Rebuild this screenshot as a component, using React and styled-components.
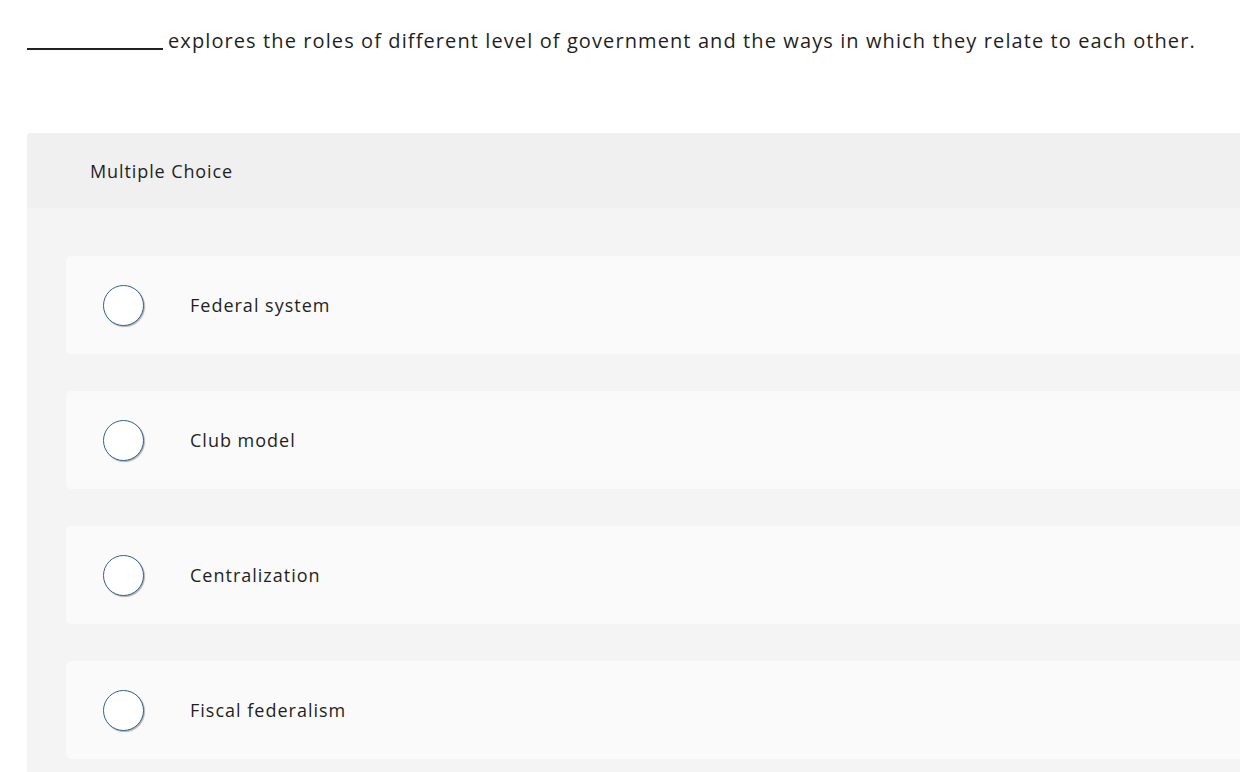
import React from "react";
import styled, { createGlobalStyle } from "styled-components";

const Global = createGlobalStyle`
  html, body { margin: 0; padding: 0; background: #fff; overflow: hidden; }
  body { font-family: "Open Sans", Lato, sans-serif; color: #1c1c1c; }
`;

const Page = styled.div`
  width: 1240px;
  height: 772px;
  overflow: hidden;
`;

const Question = styled.p`
  margin: 0;
  padding: 27px 0 0 27px;
  font-size: 20px;
  line-height: 28px;
  letter-spacing: 1.1px;
  color: #1f1f1f;
  white-space: nowrap;
`;

const Blank = styled.span`
  display: inline-block;
  width: 136px;
  border-bottom: 2px solid #222;
  margin-right: 5px;
  vertical-align: -2px;
`;

const Card = styled.section`
  margin: 78px 0 0 27px;
  width: 1260px;
  background: #f4f4f4;
  border-radius: 4px 0 0 0;
  padding-bottom: 40px;
`;

const CardHeader = styled.div`
  height: 75px;
  display: flex;
  align-items: center;
  padding-left: 63px;
  background: #f0f0f0;
  font-size: 18px;
  letter-spacing: 0.9px;
  color: #1f1f1f;
  border-radius: 4px 0 0 0;
`;

const OptionList = styled.ul`
  list-style: none;
  margin: 0;
  padding: 48px 0 0 39px;
  display: flex;
  flex-direction: column;
  gap: 37px;
`;

const Option = styled.li`
  height: 98px;
  background: #fafafa;
  border-radius: 5px 0 0 5px;
  display: flex;
  align-items: center;
  padding-left: 37px;
`;

const Radio = styled.span`
  box-sizing: border-box;
  width: 41px;
  height: 41px;
  border-radius: 50%;
  border: 1.5px solid #35618f;
  background: #fff;
  box-shadow: 1px 1px 1px rgba(0, 0, 0, 0.3);
  flex-shrink: 0;
`;

const Label = styled.span`
  margin-left: 46px;
  font-size: 18px;
  letter-spacing: 1px;
  color: #1f1f1f;
`;

const options = ["Federal system", "Club model", "Centralization", "Fiscal federalism"];

export default function App() {
  return (
    <Page>
      <Global />
      <Question>
        <Blank />
        explores the roles of different level of government and the ways in which they relate to each other.
      </Question>
      <Card>
        <CardHeader>Multiple Choice</CardHeader>
        <OptionList>
          {options.map((o) => (
            <Option key={o}>
              <Radio />
              <Label>{o}</Label>
            </Option>
          ))}
        </OptionList>
      </Card>
    </Page>
  );
}
